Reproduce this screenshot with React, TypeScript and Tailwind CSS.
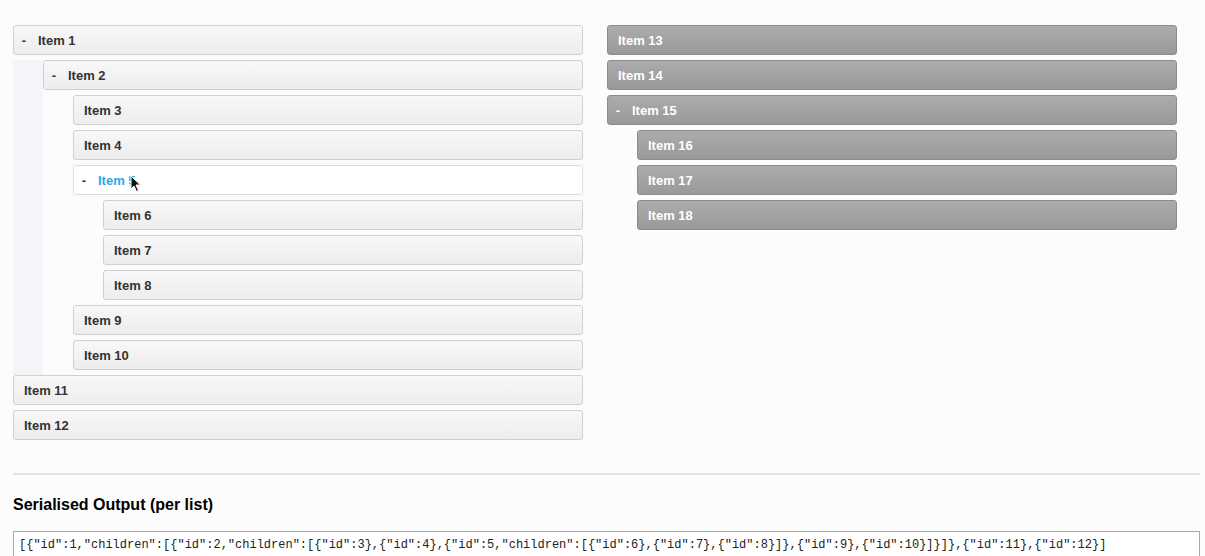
import React from "react";

type Node = { id: number; children?: Node[] };

const left: Node[] = [
  {
    id: 1,
    children: [
      {
        id: 2,
        children: [
          { id: 3 },
          { id: 4 },
          { id: 5, children: [{ id: 6 }, { id: 7 }, { id: 8 }] },
          { id: 9 },
          { id: 10 },
        ],
      },
    ],
  },
  { id: 11 },
  { id: 12 },
];

const right: Node[] = [
  { id: 13 },
  { id: 14 },
  { id: 15, children: [{ id: 16 }, { id: 17 }, { id: 18 }] },
];

function Cursor() {
  return (
    <svg
      width="12"
      height="18"
      viewBox="0 0 12 18"
      className="absolute left-[56px] top-[9px]"
    >
      <path
        d="M1 1 L1 14 L4 11 L6.5 16.5 L8.5 15.5 L6 10 L10.5 10 Z"
        fill="#111"
        stroke="#fff"
        strokeWidth="1"
        strokeLinejoin="round"
      />
    </svg>
  );
}

function Item({ node, dark, depth }: { node: Node; dark: boolean; depth: number }) {
  const hasKids = !!node.children?.length;
  const hovered = node.id === 5;
  const box = dark
    ? "border-[#8c8c8c] bg-gradient-to-b from-[#acacac] to-[#999999] text-white"
    : hovered
      ? "border-[#dcdcdc] bg-white text-[#2ea8e5]"
      : "border-[#d0d0d0] bg-gradient-to-b from-[#f8f8f8] to-[#ededed] text-[#333]";
  return (
    <li className="flex flex-col gap-[5px]">
      <div
        className={`relative flex h-[30px] items-center rounded-[3px] border pt-[2px] text-[13px] font-bold ${box}`}
      >
        {hasKids ? (
          <>
            <span
              className={`w-[20px] text-center ${dark ? "text-white" : "text-[#333]"}`}
            >
              -
            </span>
            <span className="pl-[4px]">Item {node.id}</span>
          </>
        ) : (
          <span className="pl-[10px]">Item {node.id}</span>
        )}
        {hovered ? <Cursor /> : null}
      </div>
      {hasKids ? (
        <div className="flex">
          <div
            className={`w-[30px] shrink-0 ${!dark && depth === 0 ? "mb-[-5px] bg-[#f3f5f8]" : ""}`}
          />
          <List nodes={node.children!} dark={dark} depth={depth + 1} />
        </div>
      ) : null}
    </li>
  );
}

function List({ nodes, dark, depth }: { nodes: Node[]; dark: boolean; depth: number }) {
  return (
    <ol className="flex flex-1 flex-col gap-[5px]">
      {nodes.map((n) => (
        <Item key={n.id} node={n} dark={dark} depth={depth} />
      ))}
    </ol>
  );
}

export default function App() {
  return (
    <div
      className="min-h-[556px] bg-[#fcfcfc] pl-[13px] pr-[5px] pt-[25px]"
      style={{ fontFamily: '"Liberation Sans", Arial, sans-serif' }}
    >
      <div className="flex gap-[24px]">
        <div className="w-[570px]">
          <List nodes={left} dark={false} depth={0} />
        </div>
        <div className="w-[570px]">
          <List nodes={right} dark depth={0} />
        </div>
      </div>

      <div className="mt-[33px] h-[2px] bg-[#e2e2e2]" />

      <h3 className="mt-[20px] text-[16px] font-bold leading-[20px] text-black">
        Serialised Output (per list)
      </h3>

      <div className="mt-[16px] h-[40px] border border-[#a9a9a9] bg-white px-[5px] pt-[6px] font-['Liberation_Mono',monospace] text-[12px] leading-[14px] whitespace-nowrap text-[#222]">
        {JSON.stringify(left)}
      </div>
    </div>
  );
}
